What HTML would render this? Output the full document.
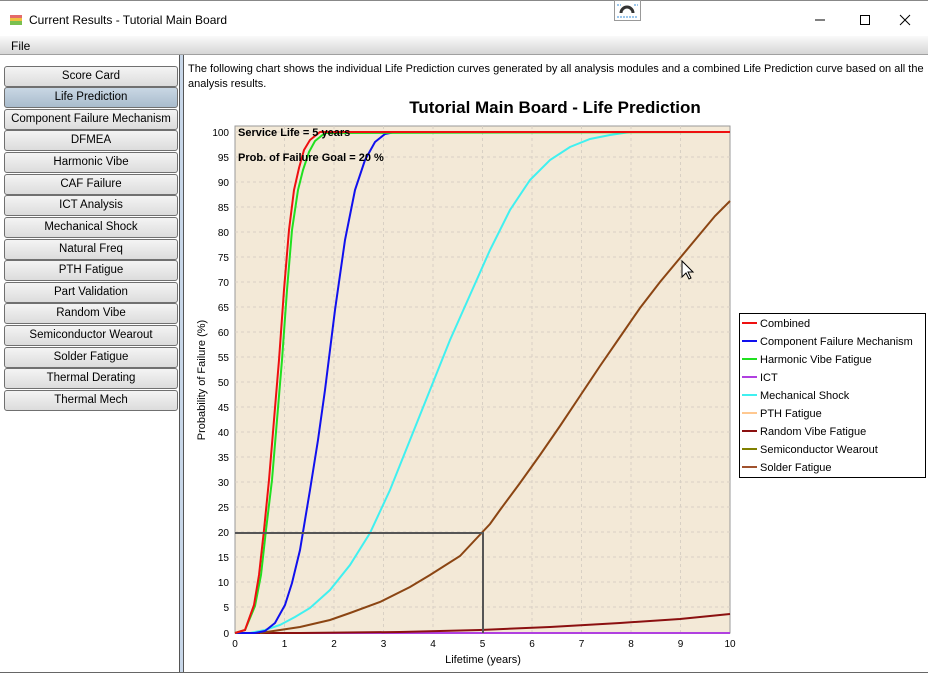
<!DOCTYPE html>
<html><head><style>
*{margin:0;padding:0;box-sizing:border-box}
body{width:928px;height:684px;background:#fff;font-family:"Liberation Sans",sans-serif;position:relative;overflow:hidden;font-size:12px}
.title{position:absolute;left:0;top:0;width:928px;height:36px;background:#fff;border-top:1px solid #888}
.title span{position:absolute;left:29px;top:12px;font-size:12px;color:#000}
.menu{position:absolute;left:0;top:36px;width:928px;height:19px;background:linear-gradient(#fafafa,#d6d6d6);border-bottom:1px solid #a0a0a0}
.menu span{position:absolute;left:11px;top:3px}
.left{position:absolute;left:0;top:55px;width:179px;height:618px;background:#fff}
.btn{position:absolute;left:4px;width:174px;height:21px;border:1px solid #707070;border-radius:3px;background:linear-gradient(#f4f4f4,#dcdcdc);text-align:center;font-size:11.5px;line-height:19px;color:#000}
.btn.sel{background:linear-gradient(#c9d7e4,#a9bccd)}
.split{position:absolute;left:179px;top:55px;width:5px;height:618px;background:#c7d6e8;border-left:1px solid #555;border-right:1px solid #555}
.desc{position:absolute;left:188px;top:62px;width:736px;font-size:11px;line-height:15px}
.bottom{position:absolute;left:0;top:672px;width:928px;height:1px;background:#666}
</style></head><body>
<div class="title">
<svg style="position:absolute;left:10px;top:14px" width="12" height="10"><rect width="12" height="3" fill="#e46a6a"/><rect y="3" width="12" height="3" fill="#f0c040"/><rect y="6" width="12" height="4" fill="#7ac050"/></svg>
<span>Current Results - Tutorial Main Board</span>
<div style="position:absolute;left:614px;top:-1px;width:27px;height:21px;border:1px solid #999;background:#fff"><svg width="25" height="19"><path d="M6 12 A6 6 0 0 1 18 12" stroke="#333" stroke-width="3" fill="none"/><path d="M2 4h4M19 4h4M2 16h21" stroke="#3a8fd8" stroke-width="1" stroke-dasharray="2 1"/></svg></div>
<svg style="position:absolute;left:810px;top:12px" width="110" height="14"><path d="M5 7h10" stroke="#000"/><rect x="50.5" y="2.5" width="9" height="9" fill="none" stroke="#000"/><path d="M90 2l10 10M100 2l-10 10" stroke="#000"/></svg>
</div>
<div class="menu"><span>File</span></div>
<div class="left">
<div class="btn" style="top:11px">Score Card</div>
<div class="btn sel" style="top:32px">Life Prediction</div>
<div class="btn" style="top:54px">Component Failure Mechanism</div>
<div class="btn" style="top:75px">DFMEA</div>
<div class="btn" style="top:97px">Harmonic Vibe</div>
<div class="btn" style="top:119px">CAF Failure</div>
<div class="btn" style="top:140px">ICT Analysis</div>
<div class="btn" style="top:162px">Mechanical Shock</div>
<div class="btn" style="top:184px">Natural Freq</div>
<div class="btn" style="top:205px">PTH Fatigue</div>
<div class="btn" style="top:227px">Part Validation</div>
<div class="btn" style="top:248px">Random Vibe</div>
<div class="btn" style="top:270px">Semiconductor Wearout</div>
<div class="btn" style="top:292px">Solder Fatigue</div>
<div class="btn" style="top:313px">Thermal Derating</div>
<div class="btn" style="top:335px">Thermal Mech</div>
</div>
<div class="split"></div>
<div class="desc">The following chart shows the individual Life Prediction curves generated by all analysis modules and a combined Life Prediction curve based on all the analysis results.</div>
<svg style="position:absolute;left:0;top:0" width="928" height="684" font-family="Liberation Sans, sans-serif">
<text x="555" y="113" font-size="17" font-weight="bold" text-anchor="middle">Tutorial Main Board - Life Prediction</text>
<rect x="235" y="126" width="495" height="507" fill="#f3e9d7" stroke="#999"/>
<g stroke="#d8d0c4" stroke-dasharray="3 3" stroke-width="1">
<path d="M284.5 126V633M334 126V633M383.5 126V633M433 126V633M482.5 126V633M532 126V633M581.5 126V633M631 126V633M680.5 126V633"/>
<path d="M235 157h495M235 182h495M235 207h495M235 232h495M235 257h495M235 282h495M235 307h495M235 332h495M235 357h495M235 382h495M235 407h495M235 432h495M235 457h495M235 482h495M235 507h495M235 532h495M235 557h495M235 582h495M235 607h495M235 132h495"/>
</g>
<g font-size="10" text-anchor="end">
<text x="229" y="136">100</text><text x="229" y="161">95</text><text x="229" y="186">90</text><text x="229" y="211">85</text><text x="229" y="236">80</text><text x="229" y="261">75</text><text x="229" y="286">70</text><text x="229" y="311">65</text><text x="229" y="336">60</text><text x="229" y="361">55</text><text x="229" y="386">50</text><text x="229" y="411">45</text><text x="229" y="436">40</text><text x="229" y="461">35</text><text x="229" y="486">30</text><text x="229" y="511">25</text><text x="229" y="536">20</text><text x="229" y="561">15</text><text x="229" y="586">10</text><text x="229" y="611">5</text><text x="229" y="637">0</text>
</g>
<g font-size="10" text-anchor="middle">
<text x="235" y="647">0</text><text x="284.5" y="647">1</text><text x="334" y="647">2</text><text x="383.5" y="647">3</text><text x="433" y="647">4</text><text x="482.5" y="647">5</text><text x="532" y="647">6</text><text x="581.5" y="647">7</text><text x="631" y="647">8</text><text x="680.5" y="647">9</text><text x="730" y="647">10</text>
</g>
<text x="483" y="663" font-size="11" text-anchor="middle">Lifetime (years)</text>
<text transform="translate(205,380) rotate(-90)" font-size="11" text-anchor="middle">Probability of Failure (%)</text>
<g fill="none" stroke-width="2">
<path d="M235 633L730 633" stroke="#b040e0"/>
<polyline stroke="#8b1010" points="235,633 300,633 400,632 480,630 550,627 620,623 680,619 730,614"/>
<polyline stroke="#8b4513" points="260,633 300,627 330,620 350,613 380,602 410,587 430,575 460,556 475,540 490,524 500,510 520,483 540,455 560,426 580,396 600,366 620,337 640,308 660,282 680,258 700,234 715,216 730,201"/>
<polyline stroke="#40f0f0" points="250,633 265,630 280,625 295,617 310,608 330,590 350,565 370,533 390,490 410,440 430,390 450,340 470,295 490,250 510,210 530,180 550,160 570,147 590,139 610,135 630,132 730,132"/>
<polyline stroke="#1010ee" points="235,633 255,633 265,631 275,623 285,605 292,583 300,550 310,490 318,440 325,390 335,310 345,240 355,190 365,160 375,142 385,134 395,132 730,132"/>
<polyline stroke="#20e020" points="235,633 245,630 255,606 261,575 266,530 272,480 277,420 282,360 287,290 292,230 298,190 303,170 309,152 315,141 325,133 730,132"/>
<polyline stroke="#ee1010" points="235,633 245,630 254,605 259,575 264,530 269,480 274,420 279,360 284,290 289,230 294,190 299,168 304,150 310,140 320,132 730,132"/>
</g>
<path d="M235 533H483V633" fill="none" stroke="#555" stroke-width="2"/>
<text x="238" y="136" font-size="11" font-weight="bold">Service Life = 5 years</text>
<text x="238" y="161" font-size="11" font-weight="bold">Prob. of Failure Goal = 20 %</text>
<rect x="739.5" y="313.5" width="186" height="164" fill="#fff" stroke="#000"/>
<g stroke-width="2" font-size="11">
<path d="M742 323h15" stroke="#ee1010"/><text x="760" y="327">Combined</text>
<path d="M742 341h15" stroke="#1010ee"/><text x="760" y="345">Component Failure Mechanism</text>
<path d="M742 359h15" stroke="#20e020"/><text x="760" y="363">Harmonic Vibe Fatigue</text>
<path d="M742 377h15" stroke="#b040e0"/><text x="760" y="381">ICT</text>
<path d="M742 395h15" stroke="#40f0f0"/><text x="760" y="399">Mechanical Shock</text>
<path d="M742 413h15" stroke="#ffc890"/><text x="760" y="417">PTH Fatigue</text>
<path d="M742 431h15" stroke="#8b1010"/><text x="760" y="435">Random Vibe Fatigue</text>
<path d="M742 449h15" stroke="#808000"/><text x="760" y="453">Semiconductor Wearout</text>
<path d="M742 467h15" stroke="#a0522d"/><text x="760" y="471">Solder Fatigue</text>
</g>
<path d="M682 261v16l4-4 3 6 2-1-3-6h5z" fill="#fff" stroke="#000" stroke-width="1"/>
</svg>
<div class="bottom"></div>
</body></html>
